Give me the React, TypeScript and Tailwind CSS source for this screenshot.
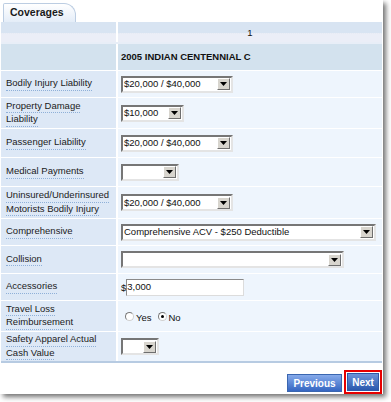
import React from "react";

const font = { fontFamily: '"Liberation Sans", Arial, sans-serif' };

function Arrow() {
  return (
    <span className="mr-[1px] flex h-[12px] w-[13px] items-center justify-center border border-t-white border-l-white border-b-[#6e6e6e] border-r-[#6e6e6e] bg-[#d8d5ce]">
      <svg width="7" height="4" viewBox="0 0 7 4">
        <path d="M0 0 H7 L3.5 4 Z" fill="#000" />
      </svg>
    </span>
  );
}

function Select({ value, className }: { value?: string; className: string }) {
  return (
    <div
      className={
        "flex h-[17px] items-center border-2 border-t-[#767676] border-l-[#767676] border-b-[#e4e4e4] border-r-[#e4e4e4] bg-white " +
        className
      }
    >
      <span className="flex-1 truncate pl-[1px] text-[9.5px] leading-none text-[#111]">{value}</span>
      <Arrow />
    </div>
  );
}

function Label({ lines }: { lines: string[] }) {
  return (
    <div className="flex flex-col justify-center pl-[5px] leading-[12.5px]">
      {lines.map((l) => (
        <span key={l} className="w-fit border-b border-dotted border-[#8fb0d8] text-[9.5px] text-[#1b1b1b]">
          {l}
        </span>
      ))}
    </div>
  );
}

function Row({ h, lines, children }: { h: string; lines: string[]; children: React.ReactNode }) {
  return (
    <div className={"flex border-t border-white " + h}>
      <div className="flex w-[115px] items-center bg-[#dde8f6]">
        <Label lines={lines} />
      </div>
      <div className="flex flex-1 items-center border-l-2 border-white bg-[#eef5fd] pl-[3px]">{children}</div>
    </div>
  );
}

export default function App() {
  return (
    <div className="bg-white pb-[8px]" style={font}>
      <div className="relative h-[394px] w-[383px] bg-white shadow-[3px_3px_5px_rgba(0,0,0,0.55)]">
        {/* tab */}
        <div className="flex h-[22px] items-end pl-[3px]">
          <div className="flex h-[19px] w-[73px] items-center rounded-tr-[12px] rounded-tl-[2px] border border-b-0 border-[#bccde2] bg-linear-to-b from-white to-[#e4edf8] pl-[6px] text-[10.5px] font-bold text-[#1a1a1a]">
            Coverages
          </div>
        </div>

        <div className="mx-[1px]">
          {/* header 1 */}
          <div className="flex h-[20px]">
            <div className="flex w-[115px] flex-col">
              <div className="h-[11px] bg-[#d8e4f2]" />
              <div className="flex-1 border-t border-dotted border-[#e6ebf4] bg-[#ebeef7]" />
            </div>
            <div className="relative flex flex-1 flex-col border-l-2 border-white">
              <div className="h-[11px] bg-[#d8e4f2]" />
              <div className="flex-1 border-t border-dotted border-[#e6ebf4] bg-[#ebeef7]" />
              <span className="absolute inset-0 flex items-center justify-center pt-[2px] text-[9.5px] text-[#111]">1</span>
            </div>
          </div>
          {/* header 2 */}
          <div className="flex h-[28px] border-t-2 border-[#e8eef7]">
            <div className="w-[115px] bg-[#d3e2ee]" />
            <div className="flex flex-1 items-center border-l-2 border-white bg-[#d3e2ee] pl-[3px] text-[9.5px] font-bold text-[#111]">
              2005 INDIAN CENTENNIAL C
            </div>
          </div>

          <Row h="h-[27px]" lines={["Bodily Injury Liability"]}>
            <Select value="$20,000 / $40,000" className="w-[112px]" />
          </Row>
          <Row h="h-[31px]" lines={["Property Damage", "Liability"]}>
            <Select value="$10,000" className="w-[63px]" />
          </Row>
          <Row h="h-[29px]" lines={["Passenger Liability"]}>
            <Select value="$20,000 / $40,000" className="w-[112px]" />
          </Row>
          <Row h="h-[29px]" lines={["Medical Payments"]}>
            <Select className="w-[58px]" />
          </Row>
          <Row h="h-[32px]" lines={["Uninsured/Underinsured", "Motorists Bodily Injury"]}>
            <Select value="$20,000 / $40,000" className="w-[112px]" />
          </Row>
          <Row h="h-[27px]" lines={["Comprehensive"]}>
            <Select value="Comprehensive ACV - $250 Deductible" className="w-[255px]" />
          </Row>
          <Row h="h-[28px]" lines={["Collision"]}>
            <Select className="w-[223px]" />
          </Row>
          <Row h="h-[27px]" lines={["Accessories"]}>
            <span className="pt-[3px] text-[9.5px] text-[#111]">$</span>
            <div className="flex h-[17px] w-[118px] items-center border border-t-[#8a8a8a] border-l-[#8a8a8a] border-b-[#dcdcdc] border-r-[#dcdcdc] bg-white text-[9.5px] text-[#111]">
              3,000
            </div>
          </Row>
          <Row h="h-[31px]" lines={["Travel Loss", "Reimbursement"]}>
            <div className="flex items-center pl-[4px] pt-[5px] text-[9.5px] text-[#111]">
              <span className="mb-[4px] h-[9px] w-[9px] rounded-full border border-[#7a7a7a] border-r-[#d0d0d0] border-b-[#d0d0d0] bg-white" />
              <span className="ml-[2px]">Yes</span>
              <span className="mb-[4px] ml-[6px] flex h-[9px] w-[9px] items-center justify-center rounded-full border border-[#7a7a7a] border-r-[#d0d0d0] border-b-[#d0d0d0] bg-white">
                <span className="h-[3px] w-[3px] rounded-full bg-black" />
              </span>
              <span className="ml-[2px]">No</span>
            </div>
          </Row>
          <Row h="h-[30px]" lines={["Safety Apparel Actual", "Cash Value"]}>
            <Select className="w-[38px]" />
          </Row>
          <div className="h-[2px] bg-[#b7cbe2]" />
        </div>

        {/* buttons */}
        <div className="mt-[7px] flex justify-end gap-[2px] pr-[1px]">
          <div className="mt-[4px] flex h-[18px] w-[55px] items-center justify-center border border-[#3a66b0] bg-linear-to-b from-[#86aaea] to-[#3566c2] text-[10px] font-bold text-white">
            Previous
          </div>
          <div className="border-2 border-[#e60000] p-[1px]">
            <div className="flex h-[18px] w-[32px] items-center justify-center border border-[#2d5aa8] bg-linear-to-b from-[#6d94d8] to-[#2a58ad] text-[10px] font-bold text-white">
              Next
            </div>
          </div>
        </div>
      </div>
    </div>
  );
}
